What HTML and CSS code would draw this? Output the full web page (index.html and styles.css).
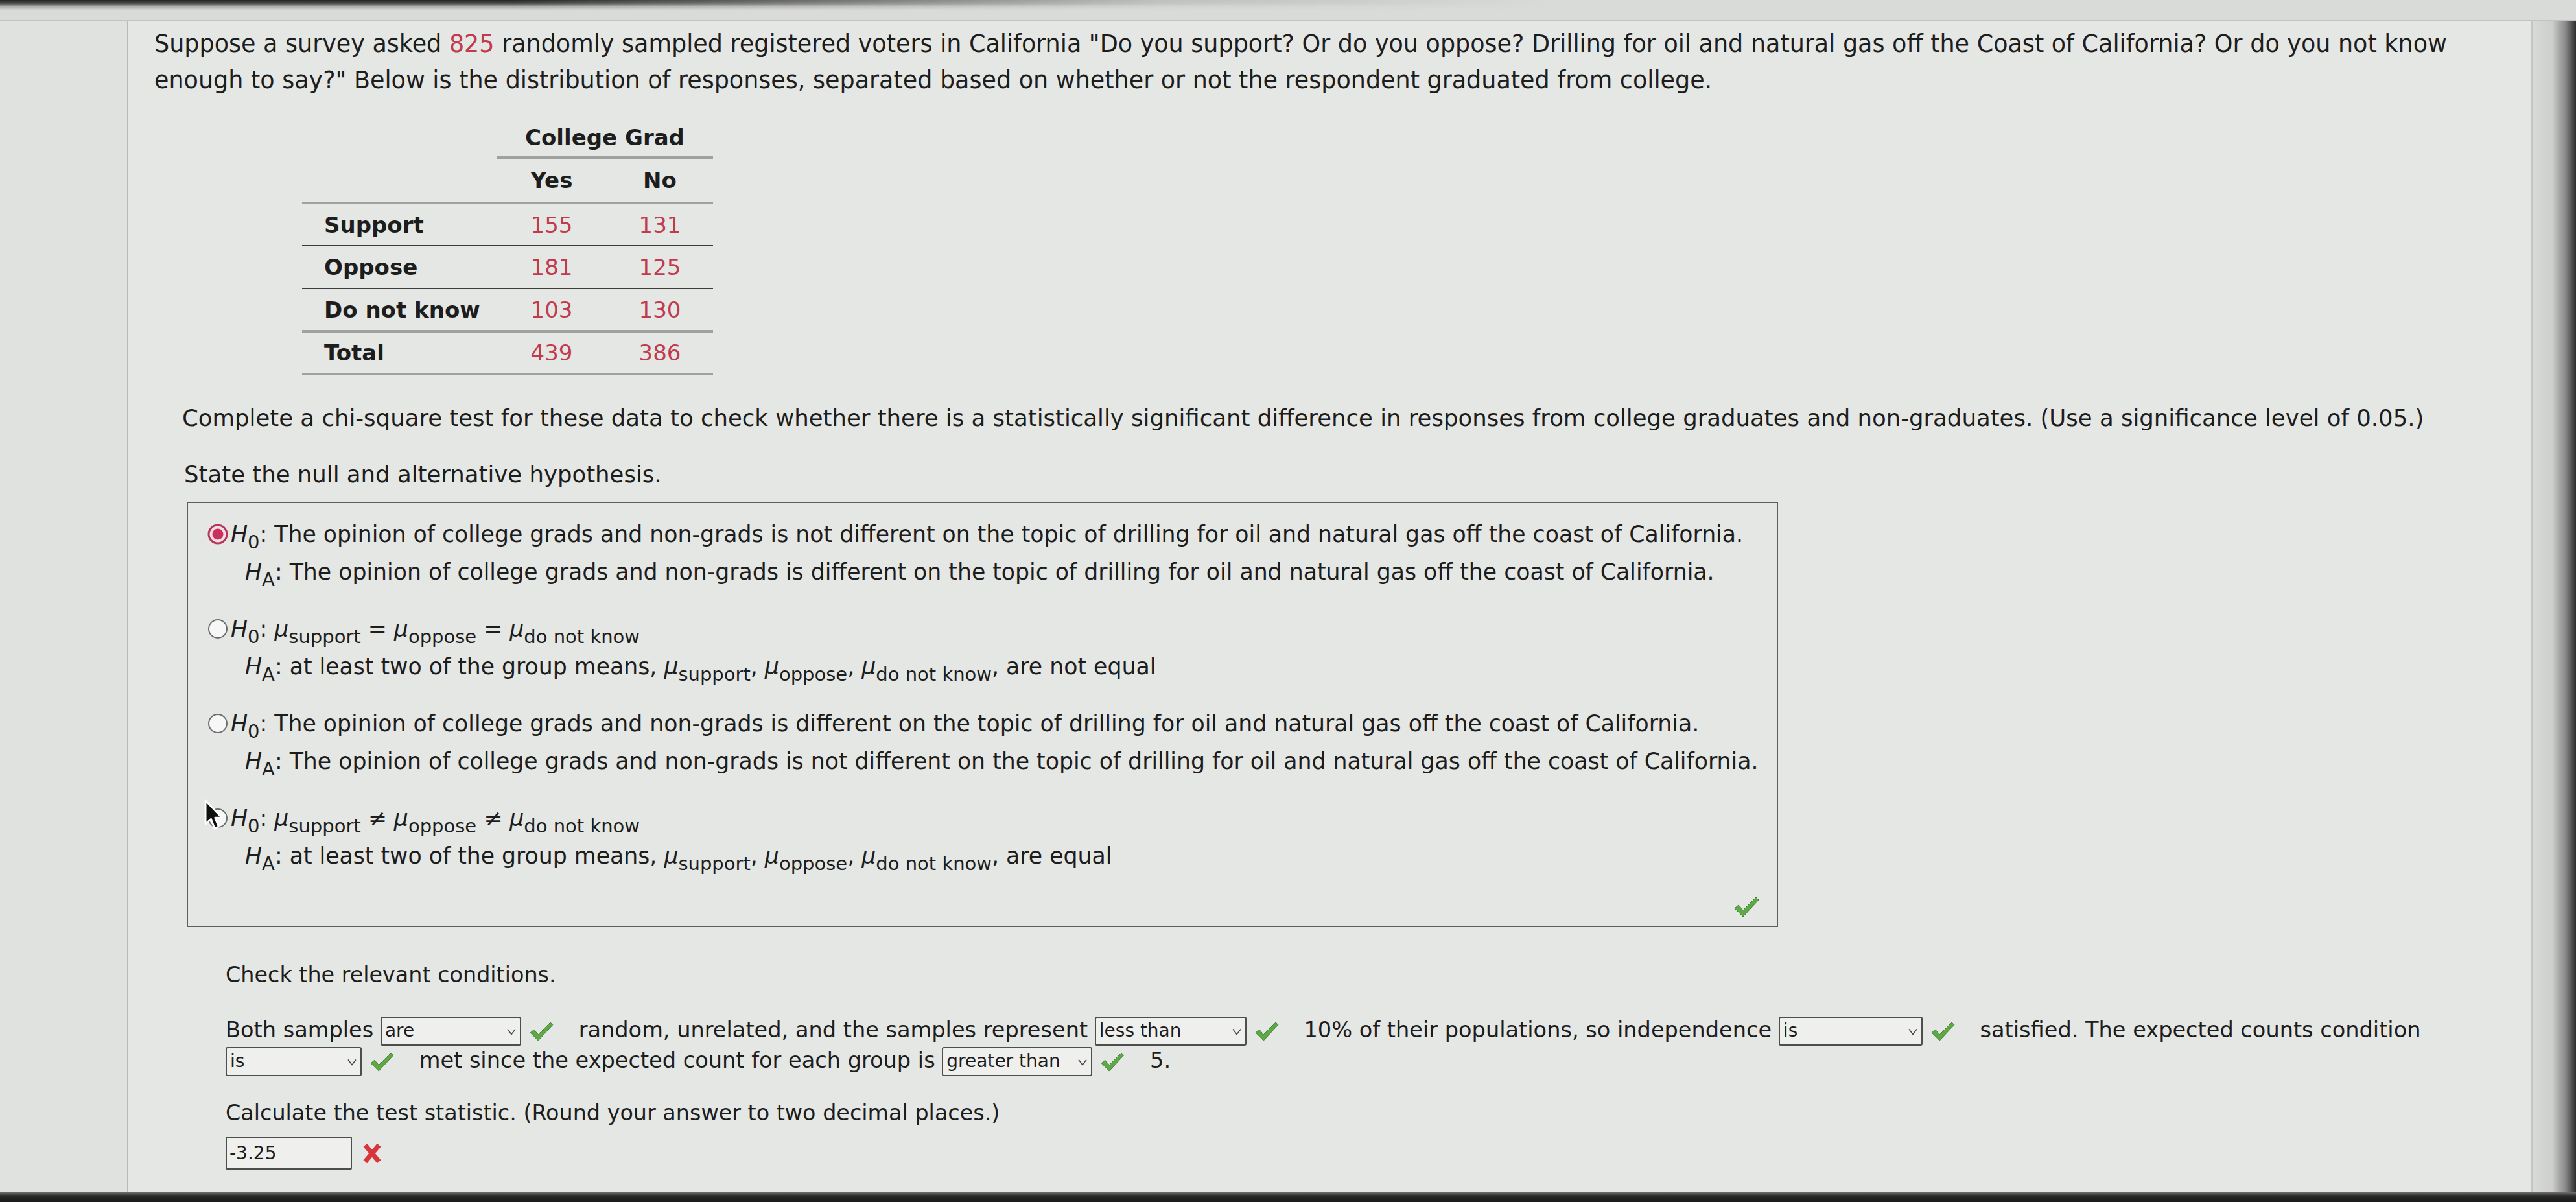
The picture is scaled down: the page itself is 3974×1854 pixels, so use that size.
FILE: index.html
```html
<!DOCTYPE html>
<html lang="en">
<head>
<meta charset="utf-8">
<title>Chi-square test</title>
<link rel="stylesheet" href="styles.css">
</head>
<body>
<div class="topbar"></div>
<div class="screen">
  <div class="gutter"></div>
  <main class="panel">
    <p class="intro">Suppose a survey asked <span class="num">825</span> randomly sampled registered voters in California "Do you support? Or do you oppose? Drilling for oil and natural gas off the Coast of California? Or do you not know<br>enough to say?" Below is the distribution of responses, separated based on whether or not the respondent graduated from college.</p>

    <table class="ct">
      <tr class="r-h1"><th class="lab"></th><th class="cg" colspan="2">College Grad</th></tr>
      <tr class="r-h2"><th class="lab"></th><th class="cy">Yes</th><th class="cn">No</th></tr>
      <tr class="r-thin"><td class="lab">Support</td><td class="v">155</td><td class="v">131</td></tr>
      <tr class="r-thin"><td class="lab">Oppose</td><td class="v">181</td><td class="v">125</td></tr>
      <tr class="r-thick"><td class="lab">Do not know</td><td class="v">103</td><td class="v">130</td></tr>
      <tr class="r-thick"><td class="lab">Total</td><td class="v">439</td><td class="v">386</td></tr>
    </table>

    <p class="q q-chi">Complete a chi-square test for these data to check whether there is a statistically significant difference in responses from college graduates and non-graduates. (Use a significance level of 0.05.)</p>
    <p class="q q-state">State the null and alternative hypothesis.</p>

    <div class="hbox">
      <div class="opt">
        <span class="radio"><svg viewBox="0 0 32 32"><circle cx="16" cy="16" r="14" fill="#f3dde5" stroke="#b5365e" stroke-width="3"/><circle cx="16" cy="16" r="8.5" fill="#c8305e"/></svg></span>
        <div class="opt-text">
          <div class="h0"><i>H</i><span class="s">0</span>: The opinion of college grads and non-grads is not different on the topic of drilling for oil and natural gas off the coast of California.</div>
          <div class="ha"><i>H</i><span class="s">A</span>: The opinion of college grads and non-grads is different on the topic of drilling for oil and natural gas off the coast of California.</div>
        </div>
      </div>
      <div class="opt">
        <span class="radio"><svg viewBox="0 0 32 32"><circle cx="16" cy="16" r="14" fill="#f6f7f6" stroke="#6c6e6c" stroke-width="2"/></svg></span>
        <div class="opt-text">
          <div class="h0"><i>H</i><span class="s">0</span>: <i>μ</i><span class="s">support</span> = <i>μ</i><span class="s">oppose</span> = <i>μ</i><span class="s">do not know</span></div>
          <div class="ha"><i>H</i><span class="s">A</span>: at least two of the group means, <i>μ</i><span class="s">support</span>, <i>μ</i><span class="s">oppose</span>, <i>μ</i><span class="s">do not know</span>, are not equal</div>
        </div>
      </div>
      <div class="opt">
        <span class="radio"><svg viewBox="0 0 32 32"><circle cx="16" cy="16" r="14" fill="#f6f7f6" stroke="#6c6e6c" stroke-width="2"/></svg></span>
        <div class="opt-text">
          <div class="h0"><i>H</i><span class="s">0</span>: The opinion of college grads and non-grads is different on the topic of drilling for oil and natural gas off the coast of California.</div>
          <div class="ha"><i>H</i><span class="s">A</span>: The opinion of college grads and non-grads is not different on the topic of drilling for oil and natural gas off the coast of California.</div>
        </div>
      </div>
      <div class="opt opt-last">
        <span class="radio"><svg viewBox="0 0 32 32"><circle cx="16" cy="16" r="14" fill="#f6f7f6" stroke="#6c6e6c" stroke-width="2"/></svg>
          <svg class="cursor" viewBox="0 0 24 36"><path d="M2 2 L2 28 L8 22.5 L12 33 L16.5 31 L12.5 21 L20 21 Z" fill="#111" stroke="#fff" stroke-width="2" stroke-linejoin="round"/></svg>
        </span>
        <div class="opt-text">
          <div class="h0"><i>H</i><span class="s">0</span>: <i>μ</i><span class="s">support</span> ≠ <i>μ</i><span class="s">oppose</span> ≠ <i>μ</i><span class="s">do not know</span></div>
          <div class="ha"><i>H</i><span class="s">A</span>: at least two of the group means, <i>μ</i><span class="s">support</span>, <i>μ</i><span class="s">oppose</span>, <i>μ</i><span class="s">do not know</span>, are equal</div>
        </div>
      </div>
      <div class="hbox-foot">
        <svg class="ck-big" viewBox="0 0 40 32"><path d="M2 18 L8 13 L15 21 L35 1 L39 5 L15 31 Z" fill="#5ea847" stroke="#3f7e2f" stroke-width="1"/></svg>
      </div>
    </div>

    <div class="cond">
      <p class="q q-check">Check the relevant conditions.</p>
      <p class="cond-line">Both samples <span class="dd w-are">are<svg class="chev" viewBox="0 0 14 10"><path d="M1 1 L7 9 L13 1" fill="none" stroke="#444" stroke-width="1.5"/></svg></span><svg class="ck" viewBox="0 0 40 32"><path d="M2 18 L8 13 L15 21 L35 1 L39 5 L15 31 Z" fill="#5ea847" stroke="#3f7e2f" stroke-width="1"/></svg> random, unrelated, and the samples represent <span class="dd w-less">less than<svg class="chev" viewBox="0 0 14 10"><path d="M1 1 L7 9 L13 1" fill="none" stroke="#444" stroke-width="1.5"/></svg></span><svg class="ck" viewBox="0 0 40 32"><path d="M2 18 L8 13 L15 21 L35 1 L39 5 L15 31 Z" fill="#5ea847" stroke="#3f7e2f" stroke-width="1"/></svg> 10% of their populations, so independence <span class="dd w-is1">is<svg class="chev" viewBox="0 0 14 10"><path d="M1 1 L7 9 L13 1" fill="none" stroke="#444" stroke-width="1.5"/></svg></span><svg class="ck" viewBox="0 0 40 32"><path d="M2 18 L8 13 L15 21 L35 1 L39 5 L15 31 Z" fill="#5ea847" stroke="#3f7e2f" stroke-width="1"/></svg> satisfied. The expected counts condition<br><span class="dd w-is2">is<svg class="chev" viewBox="0 0 14 10"><path d="M1 1 L7 9 L13 1" fill="none" stroke="#444" stroke-width="1.5"/></svg></span><svg class="ck" viewBox="0 0 40 32"><path d="M2 18 L8 13 L15 21 L35 1 L39 5 L15 31 Z" fill="#5ea847" stroke="#3f7e2f" stroke-width="1"/></svg> met since the expected count for each group is <span class="dd w-greater">greater than<svg class="chev" viewBox="0 0 14 10"><path d="M1 1 L7 9 L13 1" fill="none" stroke="#444" stroke-width="1.5"/></svg></span><svg class="ck" viewBox="0 0 40 32"><path d="M2 18 L8 13 L15 21 L35 1 L39 5 L15 31 Z" fill="#5ea847" stroke="#3f7e2f" stroke-width="1"/></svg> 5.</p>
      <p class="q q-calc">Calculate the test statistic. (Round your answer to two decimal places.)</p>
      <div class="answer">
        <span class="inp">-3.25</span>
        <svg class="xmark" viewBox="0 0 32 32"><path d="M6 4 L26 28 M26 4 L6 28" stroke="#d8363c" stroke-width="7" stroke-linecap="butt"/></svg>
      </div>
    </div>
  </main>
  <div class="rightedge"></div>
</div>
<div class="bottombar"></div>
</body>
</html>
```

FILE: styles.css
```css
html, body {
  margin: 0;
  padding: 0;
}

body {
  width: 3974px;
  height: 1854px;
  overflow: hidden;
  background: #dcdedb;
  font-family: "DejaVu Sans", Verdana, sans-serif;
  color: #1d1d1d;
  display: flex;
  flex-direction: column;
}

.topbar {
  height: 31px;
  flex: none;
  position: relative;
  background: #d9dbd8;
  border-bottom: 2px solid #c2c4c1;
}

.topbar::before {
  content: "";
  position: absolute;
  left: 0;
  top: 0;
  right: 0;
  height: 16px;
  background: linear-gradient(to bottom, #262626 0, #4a4a4a 5px, rgba(120, 120, 120, 0.5) 10px, rgba(200, 200, 200, 0) 16px);
  -webkit-mask-image: linear-gradient(to right, #000 0, #000 20%, rgba(0, 0, 0, 0.15) 45%, rgba(0, 0, 0, 0) 60%);
  mask-image: linear-gradient(to right, #000 0, #000 20%, rgba(0, 0, 0, 0.15) 45%, rgba(0, 0, 0, 0) 60%);
}

.screen {
  flex: 1;
  display: flex;
  min-height: 0;
}

.gutter {
  width: 196px;
  flex: none;
  background: #e0e2df;
  border-right: 2px solid #b9bbb8;
}

.panel {
  flex: 1;
  background: #e5e7e4;
  padding-top: 7px;
  border-right: 2px solid #c4c6c3;
  min-width: 0;
}

.rightedge {
  width: 67px;
  flex: none;
  background: linear-gradient(to right, #d8dad7, #cdcfcc 45%, #8a8b8a 75%, #2e2e2e 100%);
}

.bottombar {
  height: 16px;
  flex: none;
  background: linear-gradient(to bottom, #7a7b7a, #2a2a2a 40%, #1a1a1a);
}

/* text */
.intro {
  margin: 0 0 0 40px;
  font-size: 36.5px;
  line-height: 56px;
  white-space: nowrap;
}

.num {
  color: #c23a4e;
}

.q {
  margin: 0;
  font-size: 33px;
  line-height: 56px;
  white-space: nowrap;
}

.q-chi {
  margin: 38px 0 0 83px;
  font-size: 35.5px;
}

.q-state {
  margin: 31px 0 0 86px;
  font-size: 35.5px;
}

/* table */
.ct {
  margin: 30px 0 0 268px;
  border-collapse: collapse;
  font-size: 34px;
}

.ct th,
.ct td {
  padding: 0;
  box-sizing: border-box;
  vertical-align: middle;
}

.ct .lab {
  width: 300px;
  padding-left: 34px;
  text-align: left;
  font-weight: bold;
}

.ct .cy,
.ct .cn {
  text-align: center;
}

.ct .cy {
  width: 170px;
}

.ct .cn {
  width: 164px;
}

.r-h1 {
  height: 61px;
}

.r-h2 {
  height: 70px;
}

.ct .cg {
  border-bottom: 4px solid #9fa19e;
}

.r-h2 th {
  border-bottom: 4px solid #9fa19e;
}

.r-thin,
.r-thick {
  height: 66px;
}

.r-thin td {
  border-bottom: 2px solid #3c3c3c;
}

.r-thick td {
  border-bottom: 4px solid #9fa19e;
}

.ct .v {
  text-align: center;
  color: #c23a4e;
}

/* hypothesis box */
.hbox {
  margin: 14px 0 0 90px;
  width: 2455px;
  box-sizing: border-box;
  border: 2px solid #5b605b;
  padding: 19px 26px 13px 30px;
  font-size: 34.7px;
  line-height: 58px;
}

.opt {
  display: flex;
  align-items: flex-start;
  margin-bottom: 30px;
}

.opt-last {
  margin-bottom: 0;
}

.radio {
  width: 32px;
  height: 32px;
  flex: none;
  margin-top: 13px;
  margin-right: 4px;
  position: relative;
}

.radio svg {
  display: block;
  width: 32px;
  height: 32px;
}

.radio .cursor {
  position: absolute;
  left: -6px;
  top: -14px;
  width: 34px;
  height: 50px;
}

.opt-text {
  white-space: nowrap;
}

.ha {
  padding-left: 22px;
}

.s {
  font-size: 29px;
  vertical-align: -10px;
  line-height: 0;
}

.hbox-foot {
  height: 66px;
  display: flex;
  justify-content: flex-end;
  align-items: flex-end;
}

.ck-big {
  width: 42px;
  height: 32px;
}

/* conditions */
.cond {
  margin: 46px 0 0 150px;
}

.q-check,
.q-calc {
  font-size: 33.4px;
}

.cond-line {
  margin: 34px 0 0;
  font-size: 33.6px;
  line-height: 46px;
  white-space: nowrap;
}

.dd {
  display: inline-flex;
  align-items: center;
  justify-content: space-between;
  height: 45px;
  box-sizing: border-box;
  border: 2px solid #4d4f4d;
  border-radius: 3px;
  background: #eff0ee;
  font-size: 28px;
  line-height: 1;
  padding: 0 6px 2px 5px;
  vertical-align: middle;
}

.chev {
  width: 14px;
  height: 11px;
  margin-top: 4px;
}

.w-are { width: 217px; }
.w-less { width: 234px; }
.w-is1 { width: 222px; }
.w-is2 { width: 210px; }
.w-greater { width: 232px; }

.ck {
  width: 38px;
  height: 30px;
  vertical-align: middle;
  margin: 0 28px 0 12px;
}

.q-calc {
  margin-top: 29px;
}

.answer {
  margin-top: 8px;
  display: flex;
  align-items: center;
  gap: 14px;
}

.inp {
  width: 195px;
  height: 51px;
  box-sizing: border-box;
  border: 2px solid #4d4f4d;
  border-radius: 2px;
  background: #eff0ee;
  font-size: 28px;
  padding-left: 4px;
  display: flex;
  align-items: center;
}

.xmark {
  width: 34px;
  height: 34px;
}
```
